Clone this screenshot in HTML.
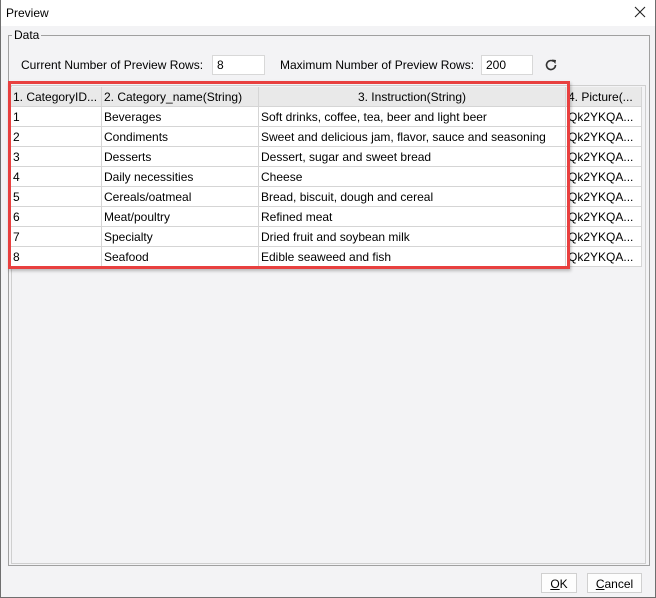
<!DOCTYPE html>
<html><head><style>
*{box-sizing:border-box;margin:0;padding:0}
body{width:656px;height:598px;overflow:hidden;font-family:"Liberation Sans",sans-serif;font-size:12px;color:#000;background:#f3f3f5;position:relative}
.win{position:absolute;left:0;top:0;width:656px;height:598px;border:1px solid #6f6f6f;border-top:none;background:#f3f3f5}
.title{position:absolute;left:0;top:0;width:654px;height:26px;background:#fff;}
.title span{position:absolute;left:5px;top:6px}
.x{position:absolute;left:632px;top:5px}
.fs{position:absolute;left:7px;top:35px;width:642px;height:531px;border:1px solid #a0a0a0;}
.legend{position:absolute;left:11px;top:28px;background:#f3f3f5;padding:0 2px}
.lbl{position:absolute;top:58px}
.inp{position:absolute;top:55px;height:20px;background:#fff;border:1px solid #d8d8d8;padding:2px 4px}
.grid{position:absolute;left:10px;top:85px;width:635px;height:479px;border:1px solid #cfcfcf;}
.c{position:absolute;height:20px;border-right:1px solid #d5d5d5;border-bottom:1px solid #d5d5d5;background:#fff;padding:3px 2px 0;white-space:nowrap;overflow:hidden}
.h{background:#e9e9e9;height:20px;padding:3px 2px 0}
.red{position:absolute;left:7px;top:81px;width:562px;height:188px;border:3px solid #e8403f;box-shadow:1px 2px 3px rgba(0,0,0,.25)}
.btn{position:absolute;top:573px;height:20px;border:1px solid #d0d0d0;background:#fdfdfd;text-align:center;padding-top:3px}
</style></head><body>
<div class="win">
<div class="title"><span>Preview</span>
<svg class="x" width="14" height="14" viewBox="0 0 14 14"><path d="M2 2L12 12M12 2L2 12" stroke="#222" stroke-width="1.1"/></svg></div>
<div class="fs"></div>
<div class="legend">Data</div>
<div class="lbl" style="left:20px">Current Number of Preview Rows:</div>
<div class="inp" style="left:211px;width:53px">8</div>
<div class="lbl" style="left:279px">Maximum Number of Preview Rows:</div>
<div class="inp" style="left:480px;width:52px">200</div>
<svg style="position:absolute;left:543px;top:58px" width="14" height="14" viewBox="0 0 14 14"><path d="M11.5 7A4.5 4.5 0 1 1 9.8 3.5" fill="none" stroke="#333" stroke-width="1.6"/><path d="M8 1.5L12 2L11.3 6Z" fill="#333"/></svg>
<div class="grid"></div>
<div id="rows"></div>
<div class="red"></div>
<div class="btn" style="left:540px;width:36px"><u>O</u>K</div>
<div class="btn" style="left:586px;width:55px"><u>C</u>ancel</div>
</div>
<script>
var cols=[[10,91],[101,157],[258,307],[565,76]];
var hd=["1. CategoryID...","2. Category_name(String)","3. Instruction(String)","4. Picture(..."];
var d=[["1","Beverages","Soft drinks, coffee, tea, beer and light beer"],["2","Condiments","Sweet and delicious jam, flavor, sauce and seasoning"],["3","Desserts","Dessert, sugar and sweet bread"],["4","Daily necessities","Cheese"],["5","Cereals/oatmeal","Bread, biscuit, dough and cereal"],["6","Meat/poultry","Refined meat"],["7","Specialty","Dried fruit and soybean milk"],["8","Seafood","Edible seaweed and fish"]];
var h="";
for(var i=0;i<4;i++){h+='<div class="c h" style="left:'+cols[i][0]+'px;top:87px;width:'+cols[i][1]+'px;'+(i==2?'text-align:center;':'')+'">'+hd[i]+'</div>';}
for(var r=0;r<8;r++){var row=d[r].concat(["Qk2YKQA..."]);for(var i=0;i<4;i++){h+='<div class="c" style="left:'+cols[i][0]+'px;top:'+(107+r*20)+'px;width:'+cols[i][1]+'px">'+row[i]+'</div>';}}
document.getElementById("rows").innerHTML=h;
</script>
</body></html>
